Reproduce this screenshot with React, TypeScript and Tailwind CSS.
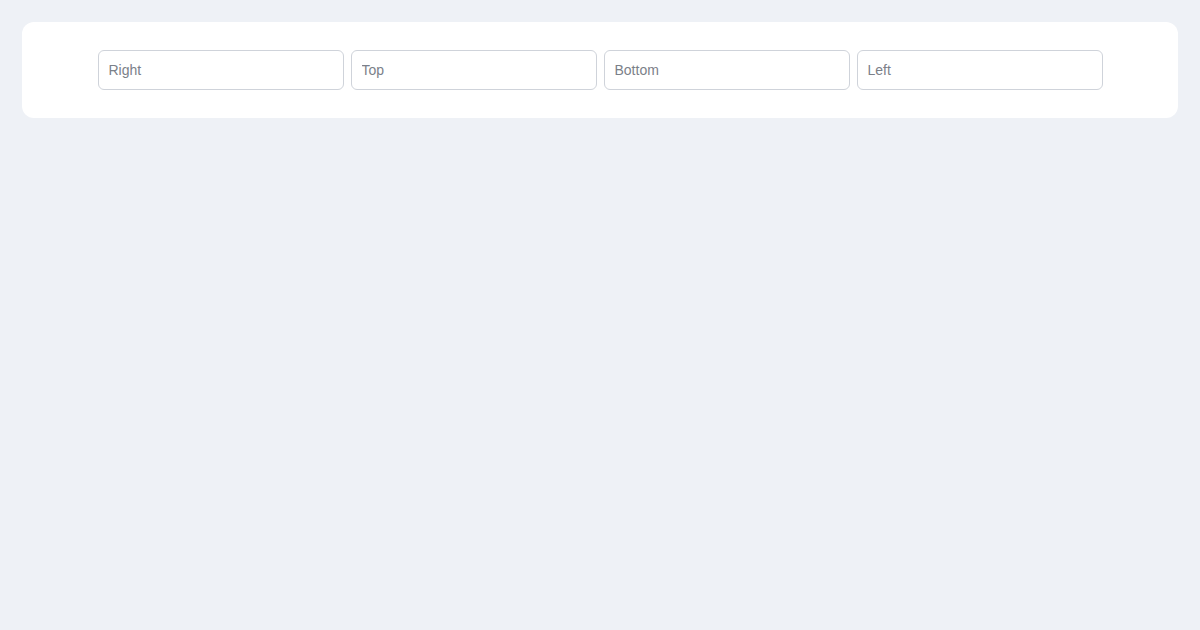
export default function App() {
  const fields = ["Right", "Top", "Bottom", "Left"];
  return (
    <div className="min-h-screen bg-[#eef1f6] p-[22px]" style={{ fontFamily: '"Liberation Sans", Arial, sans-serif' }}>
      <div className="bg-white rounded-xl h-[96px] flex items-center justify-center gap-[7px]">
        {fields.map(f => (
          <input key={f} type="text" placeholder={f}
            className="w-[246px] h-[40px] px-[10px] text-sm text-gray-700 placeholder:text-[#7b8089] border border-[#cfd3da] rounded-md bg-white outline-none" />
        ))}
      </div>
    </div>
  );
}
